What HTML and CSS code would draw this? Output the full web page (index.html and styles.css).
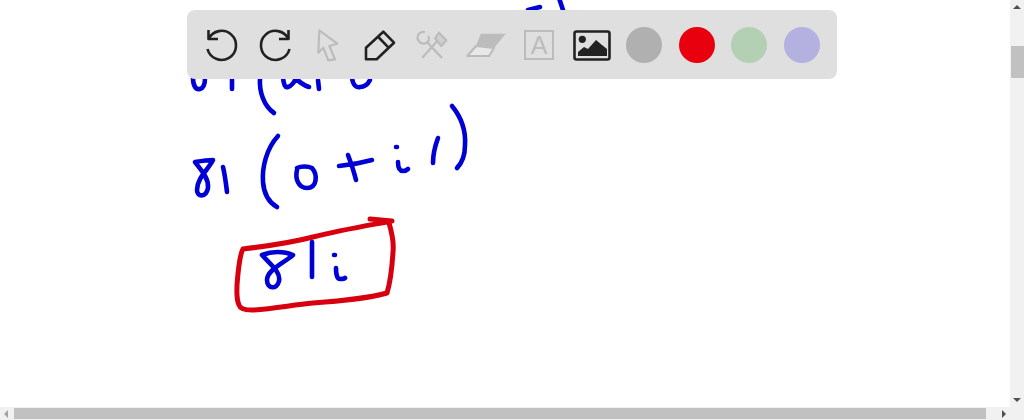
FILE: index.html
```html
<!DOCTYPE html>
<html lang="en">

<head>
    <meta charset="UTF-8">
    <meta name="viewport" content="width=device-width, initial-scale=1.0">
    <title>Whiteboard</title>
    <link rel="stylesheet" href="styles.css">
</head>

<body>
    <div class="window">
        <div class="board">
            <!-- handwriting -->
            <svg class="ink" width="1010" height="407" viewBox="0 0 1010 407">
                <g class="blue">
                    <path d="M528,10 L540,7 M559,-2 L563,10" />
                    <path d="M193,78 C193,86 196,90 200,89 C204,88 205,84 205,78" />
                    <path d="M232,78 L232,89" />
                    <path d="M260,78 C259,92 264,106 274,113" />
                    <path d="M283,78 C284,85 285,88 288,87 C291,86 294,83 296,78 C299,82 303,85 309,87 M318,80 L319,89" />
                    <path d="M352,78 C353,85 356,88 360,87 C364,87 368,84 370,80" />

                    <path d="M195,162 C201,161 207,160 213,160 C208,170 197,178 197,190 C197,197 206,198 208,188 C209,178 201,170 195,162 Z" />
                    <path d="M223,167 C225,175 226,184 227,192" />
                    <path d="M278,136 C266,149 262,168 263,182 C264,195 270,203 277,207" />
                    <path d="M297,168 C301,166 308,166 312,168 C318,175 317,188 307,188 C298,188 295,178 297,170" />
                    <path d="M339,166 C350,165 361,163 372,160 M348,155 C351,163 354,172 356,180" />
                    <path d="M396,147 L397,147 M398,162 C398,168 400,171 403,171 C405,171 407,170 408,169" />
                    <path d="M438,138 C435,146 433,155 433,163" />
                    <path d="M452,106 C461,117 466,130 465,145 C465,155 462,163 457,168" />

                    <path d="M262,255 C272,251 284,251 293,255 C284,263 267,270 267,280 C267,289 277,290 279,281 C281,272 270,264 262,255 Z" />
                    <path d="M312,242 L312,277" />
                    <path d="M334,255 L335,255 M336,268 C336,274 337,279 340,279 C342,279 344,279 345,278" />
                </g>
                <path class="red" d="M370,219 L392,221 M392,221 C365,226 340,230 313,237 C290,243 268,246 243,249 C240,254 238,272 237,285 C237,292 236,298 239,305 C240,309 245,310 252,310 C272,309 292,305 313,303 C340,301 365,299 387,293 C391,280 392,268 393,252 C394,243 392,233 389,223" />
            </svg>

            <!-- toolbar over the board -->
            <div class="toolbar">
                <svg class="tool" viewBox="0 0 36 36">
                    <path class="line-dark" d="M4.5,3 V12 H14 M4.5,12 A14.5,14.5 0 1 1 3.5,22" />
                </svg>
                <svg class="tool" viewBox="0 0 36 36">
                    <path class="line-dark" d="M31.5,3 V12 H22 M31.5,12 A14.5,14.5 0 1 0 32.5,22" />
                </svg>
                <svg class="tool" viewBox="0 0 36 36">
                    <path class="line-grey" d="M10.3,3.3 L28.3,16.7 L20.3,19 L26,32.3 L19.3,33.3 L14.3,20.7 L9.3,25.7 Z" />
                </svg>
                <svg class="tool" viewBox="0 0 36 36">
                    <path class="line-dark" d="M4,32.3 V20.7 L21.3,4.7 L32,15.7 L14.7,32.3 Z M16.3,10 L27.3,21.3" />
                </svg>
                <svg class="tool" viewBox="0 0 36 36">
                    <path class="line-grey" d="M8.3,30.7 L23.3,14 M28,31 L13,15 M11,5 C6,4 3,8 3.5,11 C4,15 8,18 12,16 C15,15 16,11 14,9" />
                    <path class="line-grey hammer" d="M21,11.3 L25,5.7 L32.3,13.3 L27.3,19 Z" />
                </svg>
                <svg class="tool eraser" viewBox="0 0 36 36">
                    <path class="fill-grey" d="M12.7,6.7 H37.7 L26,21 L8,19 Z" />
                    <path class="line-grey eraser-tip" d="M8,19 L-0.7,29 H21 L26,21 Z" />
                </svg>
                <div class="tool text-tool">A</div>
                <svg class="tool" viewBox="0 0 36 36">
                    <rect class="line-dark" x="0.5" y="4.5" width="35" height="28" rx="2" />
                    <circle class="fill-dark" cx="8.3" cy="12.3" r="3.6" />
                    <path class="fill-dark" d="M4,29 V25 L10,20 L14,22 L22,13 L28,18 L33,22 V29 Z" />
                </svg>
                <div class="tool swatch swatch-grey"></div>
                <div class="tool swatch swatch-red"></div>
                <div class="tool swatch swatch-green"></div>
                <div class="tool swatch swatch-purple"></div>
            </div>
        </div>

        <div class="scroll-y">
            <div class="arrow arrow-up"></div>
            <div class="thumb-y"></div>
            <div class="arrow arrow-down"></div>
        </div>
        <div class="scroll-x">
            <div class="arrow arrow-left"></div>
            <div class="thumb-x"></div>
            <div class="arrow arrow-right"></div>
        </div>
        <div class="corner"></div>
    </div>
</body>

</html>
```

FILE: styles.css
```css
* {
    padding: 0;
    margin: 0;
    box-sizing: border-box;
}

html,
body {
    height: 100%;
    overflow: hidden;
    background-color: #fff;
}

.window {
    display: grid;
    grid-template-columns: 1010px 14px;
    grid-template-rows: 407px 13px;
    width: 1024px;
    height: 420px;
}

.board {
    position: relative;
    overflow: hidden;
}

.ink {
    display: block;
}

.ink path {
    fill: none;
    stroke-linecap: round;
    stroke-linejoin: round;
}

.blue path {
    stroke: #0000d6;
    stroke-width: 4.6;
}

.ink .red {
    stroke: #d8000f;
    stroke-width: 5;
}

/* toolbar */
.toolbar {
    position: absolute;
    top: 10px;
    left: 187px;
    display: flex;
    gap: 16.6px;
    align-items: center;
    width: 650px;
    height: 69px;
    padding: 0 17px;
    background-color: #dfdfdf;
    border-radius: 8px;
}

.tool {
    flex: none;
    width: 36px;
    height: 36px;
    overflow: visible;
}

.eraser {
    margin-left: 1.5px;
}

.line-dark,
.line-grey {
    fill: none;
    stroke-linejoin: round;
}

.line-dark {
    stroke: #222;
    stroke-width: 2.6;
}

.line-grey {
    stroke: #bcbcbc;
    stroke-width: 2.2;
}

.hammer {
    fill: #cfcfcf;
}

.eraser-tip {
    fill: #e8e8e8;
}

.fill-dark {
    fill: #222;
}

.fill-grey {
    fill: #bcbcbc;
}

.text-tool {
    width: 30px;
    height: 30px;
    margin: 0 3px;
    border: 2px solid #bcbcbc;
    color: #bcbcbc;
    font-family: "Liberation Sans", sans-serif;
    font-size: 25px;
    line-height: 26px;
    text-align: center;
}

.swatch {
    border-radius: 50%;
}

.swatch-grey {
    background-color: #b0b0b0;
}

.swatch-red {
    background-color: #e8000f;
}

.swatch-green {
    background-color: #b4d0b4;
}

.swatch-purple {
    background-color: #b4b0e0;
}

/* scrollbars */
.scroll-y,
.scroll-x {
    display: flex;
    align-items: center;
    background-color: #f1f1f1;
}

.scroll-y {
    flex-direction: column;
    padding: 5px 0;
}

.scroll-x {
    padding: 0 4px;
}

.thumb-y {
    width: 13px;
    height: 32px;
    margin-top: 37px;
    background-color: #c1c1c1;
}

.thumb-x {
    width: 972px;
    height: 11px;
    margin-left: 6px;
    background-color: #c1c1c1;
}

.arrow {
    width: 0;
    height: 0;
    border: 4px solid transparent;
}

.arrow-up {
    border-top: 0;
    border-bottom-color: #505050;
}

.arrow-down {
    margin-top: auto;
    border-bottom: 0;
    border-top-color: #505050;
}

.arrow-left {
    border-left: 0;
    border-right-color: #a3a3a3;
}

.arrow-right {
    margin-left: auto;
    border-right: 0;
    border-left-color: #505050;
}

.corner {
    background-color: #f1f1f1;
}
```
